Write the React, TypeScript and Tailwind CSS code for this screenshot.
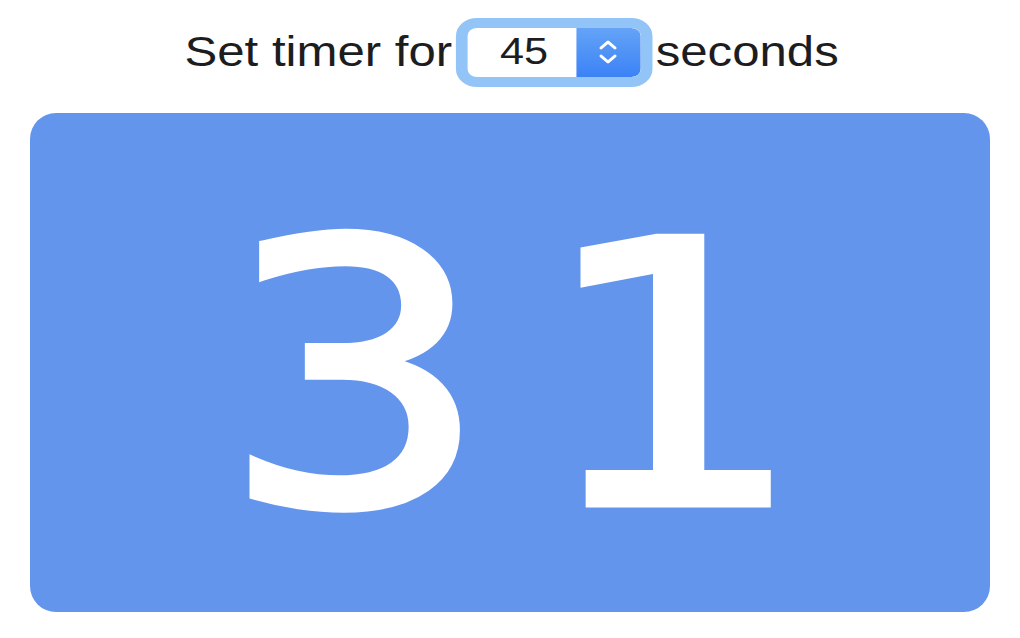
import React from 'react';

// Simple countdown card
function Stepper() {
  return (
    <div className="flex flex-col items-center justify-center w-[55px] h-full bg-gradient-to-b from-[#64a3f7] to-[#3b82f6] rounded-r-[8px]">
      <svg width="24" height="32" viewBox="0 0 24 32" fill="none" stroke="white" strokeWidth="2.6" strokeLinecap="round" strokeLinejoin="round">
        <path d="M6 12 L12 6 L18 12" />
        <path d="M6 20 L12 26 L18 20" />
      </svg>
    </div>
  );
}

export default function App() {
  const seconds = 45;
  const remaining = 31;

  return (
    <div className="w-[1020px] h-[638px] bg-white flex flex-col items-center overflow-hidden" style={{ fontFamily: '"Liberation Sans", Arial, sans-serif' }}>
      <div className="h-[113px] flex items-center justify-center pb-[9px]">
        <div className="flex items-center origin-center scale-x-[1.17] translate-x-[2px]">
          <span className="text-[42px] text-[#1d1d1f] leading-none">Set timer for</span>
          <div className="ml-[3px] mr-[3px] p-[10px] rounded-[18px] bg-[#93c4f8]">
            <div className="flex h-[49px] w-[148px] rounded-[8px] bg-white overflow-hidden">
              <div className="flex-1 flex items-center justify-center text-[37px] text-[#1d1d1f] pl-[4px]">{seconds}</div>
              <Stepper />
            </div>
          </div>
          <span className="text-[42px] text-[#1d1d1f] leading-none">seconds</span>
        </div>
      </div>
      <div className="w-[960px] h-[499px] rounded-[26px] bg-[#6495ed] flex items-center justify-center overflow-hidden">
        <div
          className="text-white text-[366px] leading-none scale-x-[1.2] tracking-[36px] pl-[36px] translate-y-[14px] [-webkit-text-stroke:7px_white]"
          style={{ fontFamily: '"DejaVu Sans Mono", monospace' }}
        >
          {remaining}
        </div>
      </div>
    </div>
  );
}
